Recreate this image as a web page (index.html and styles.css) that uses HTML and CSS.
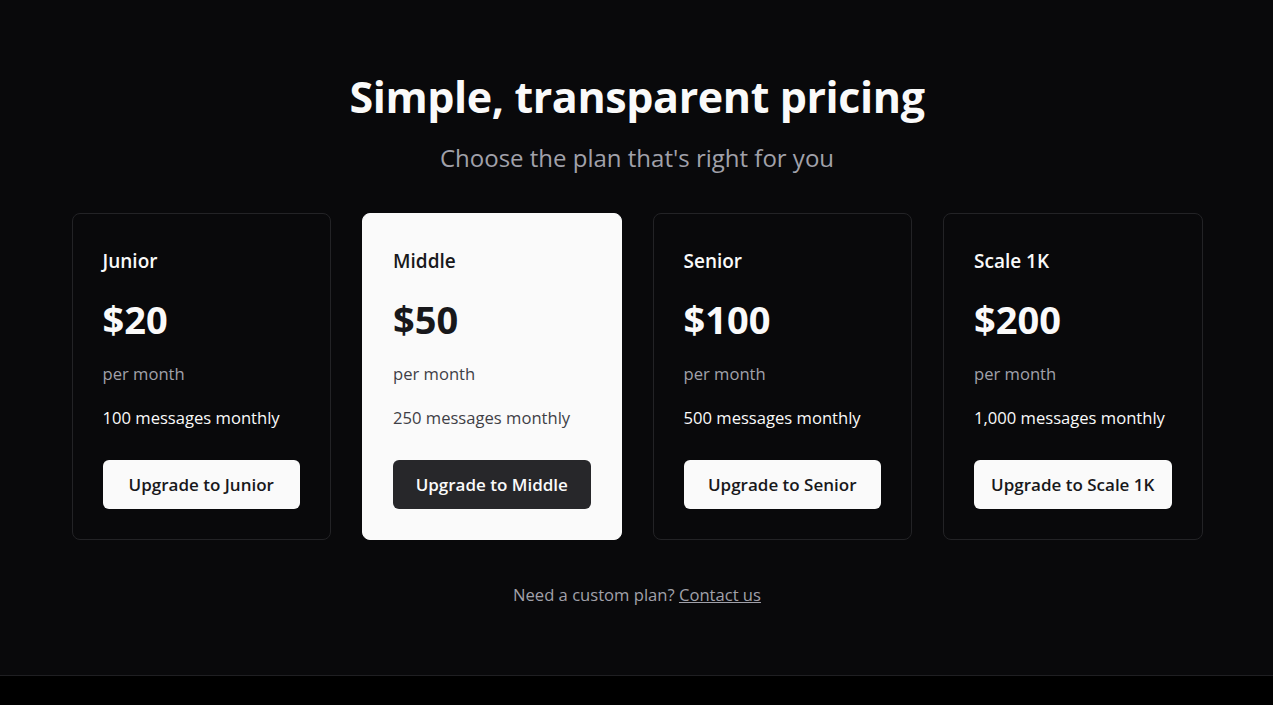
FILE: index.html
```html
<!DOCTYPE html>
<html lang="en">
<head>
  <meta charset="UTF-8">
  <title>Pricing</title>
  <link rel="stylesheet" href="styles.css">
</head>
<body>
  <main class="pricing">
    <h1 class="pricing-title">Simple, transparent pricing</h1>
    <p class="pricing-subtitle">Choose the plan that's right for you</p>

    <div class="plans">
      <div class="plan">
        <h3 class="plan-name">Junior</h3>
        <div class="plan-price">$20</div>
        <p class="plan-period">per month</p>
        <p class="plan-quota">100 messages monthly</p>
        <button class="plan-btn">Upgrade to Junior</button>
      </div>
      <div class="plan plan-featured">
        <h3 class="plan-name">Middle</h3>
        <div class="plan-price">$50</div>
        <p class="plan-period">per month</p>
        <p class="plan-quota">250 messages monthly</p>
        <button class="plan-btn">Upgrade to Middle</button>
      </div>
      <div class="plan">
        <h3 class="plan-name">Senior</h3>
        <div class="plan-price">$100</div>
        <p class="plan-period">per month</p>
        <p class="plan-quota">500 messages monthly</p>
        <button class="plan-btn">Upgrade to Senior</button>
      </div>
      <div class="plan">
        <h3 class="plan-name">Scale 1K</h3>
        <div class="plan-price">$200</div>
        <p class="plan-period">per month</p>
        <p class="plan-quota">1,000 messages monthly</p>
        <button class="plan-btn">Upgrade to Scale 1K</button>
      </div>
    </div>

    <p class="custom-plan">Need a custom plan? <a href="#">Contact us</a></p>
  </main>
</body>
</html>
```

FILE: styles.css
```css
/* Base */
body {
  margin: 0;
  background: #000;
  color: #fafafa;
  font-family: 'Open Sans', 'Noto Sans', sans-serif;
}

/* Page section */
.pricing {
  box-sizing: border-box;
  height: 676px;
  background: #09090b;
  border-bottom: 1px solid #1f1f22;
  padding: 67px 0 0 1px;
  text-align: center;
}

.pricing-title {
  margin: 0;
  font-size: 43px;
  font-weight: 700;
  line-height: 60px;
  letter-spacing: -0.4px;
}

.pricing-subtitle {
  margin: 0;
  margin-top: 15px;
  font-size: 24px;
  line-height: 32px;
  color: #a1a1aa;
}

/* Plan cards */
.plans {
  display: grid;
  grid-template-columns: repeat(4, 1fr);
  gap: 31px;
  width: 1131px;
  margin: 39px auto 0;
  text-align: left;
}

.plan {
  border: 1px solid #232326;
  border-radius: 8px;
  padding: 30px;
  background: #09090b;
}

.plan-name {
  margin: 4px 0 0;
  font-size: 19px;
  font-weight: 600;
  line-height: 26px;
}

.plan-price {
  margin-top: 20px;
  font-size: 38px;
  font-weight: 700;
  line-height: 50px;
}

.plan-period {
  margin: 18px 0 0;
  font-size: 16.6px;
  line-height: 24px;
  color: #a1a1aa;
}

.plan-quota {
  margin: 20px 0 0;
  font-size: 16.6px;
  line-height: 24px;
}

.plan-btn {
  display: block;
  width: 100%;
  height: 49px;
  margin-top: 30px;
  border: none;
  border-radius: 6px;
  background: #fafafa;
  color: #18181b;
  font-family: inherit;
  font-size: 17px;
  font-weight: 560;
}

/* Highlighted plan */
.plan-featured {
  background: #fafafa;
  border-color: #fafafa;
  color: #18181b;
}

.plan-featured .plan-period,
.plan-featured .plan-quota {
  color: #3f3f46;
}

.plan-featured .plan-btn {
  background: #27272a;
  color: #fafafa;
}

/* Footer note */
.custom-plan {
  margin: 43px 0 0;
  font-size: 16.6px;
  line-height: 24px;
  color: #a1a1aa;
}

.custom-plan a {
  color: #a1a1aa;
}
```
